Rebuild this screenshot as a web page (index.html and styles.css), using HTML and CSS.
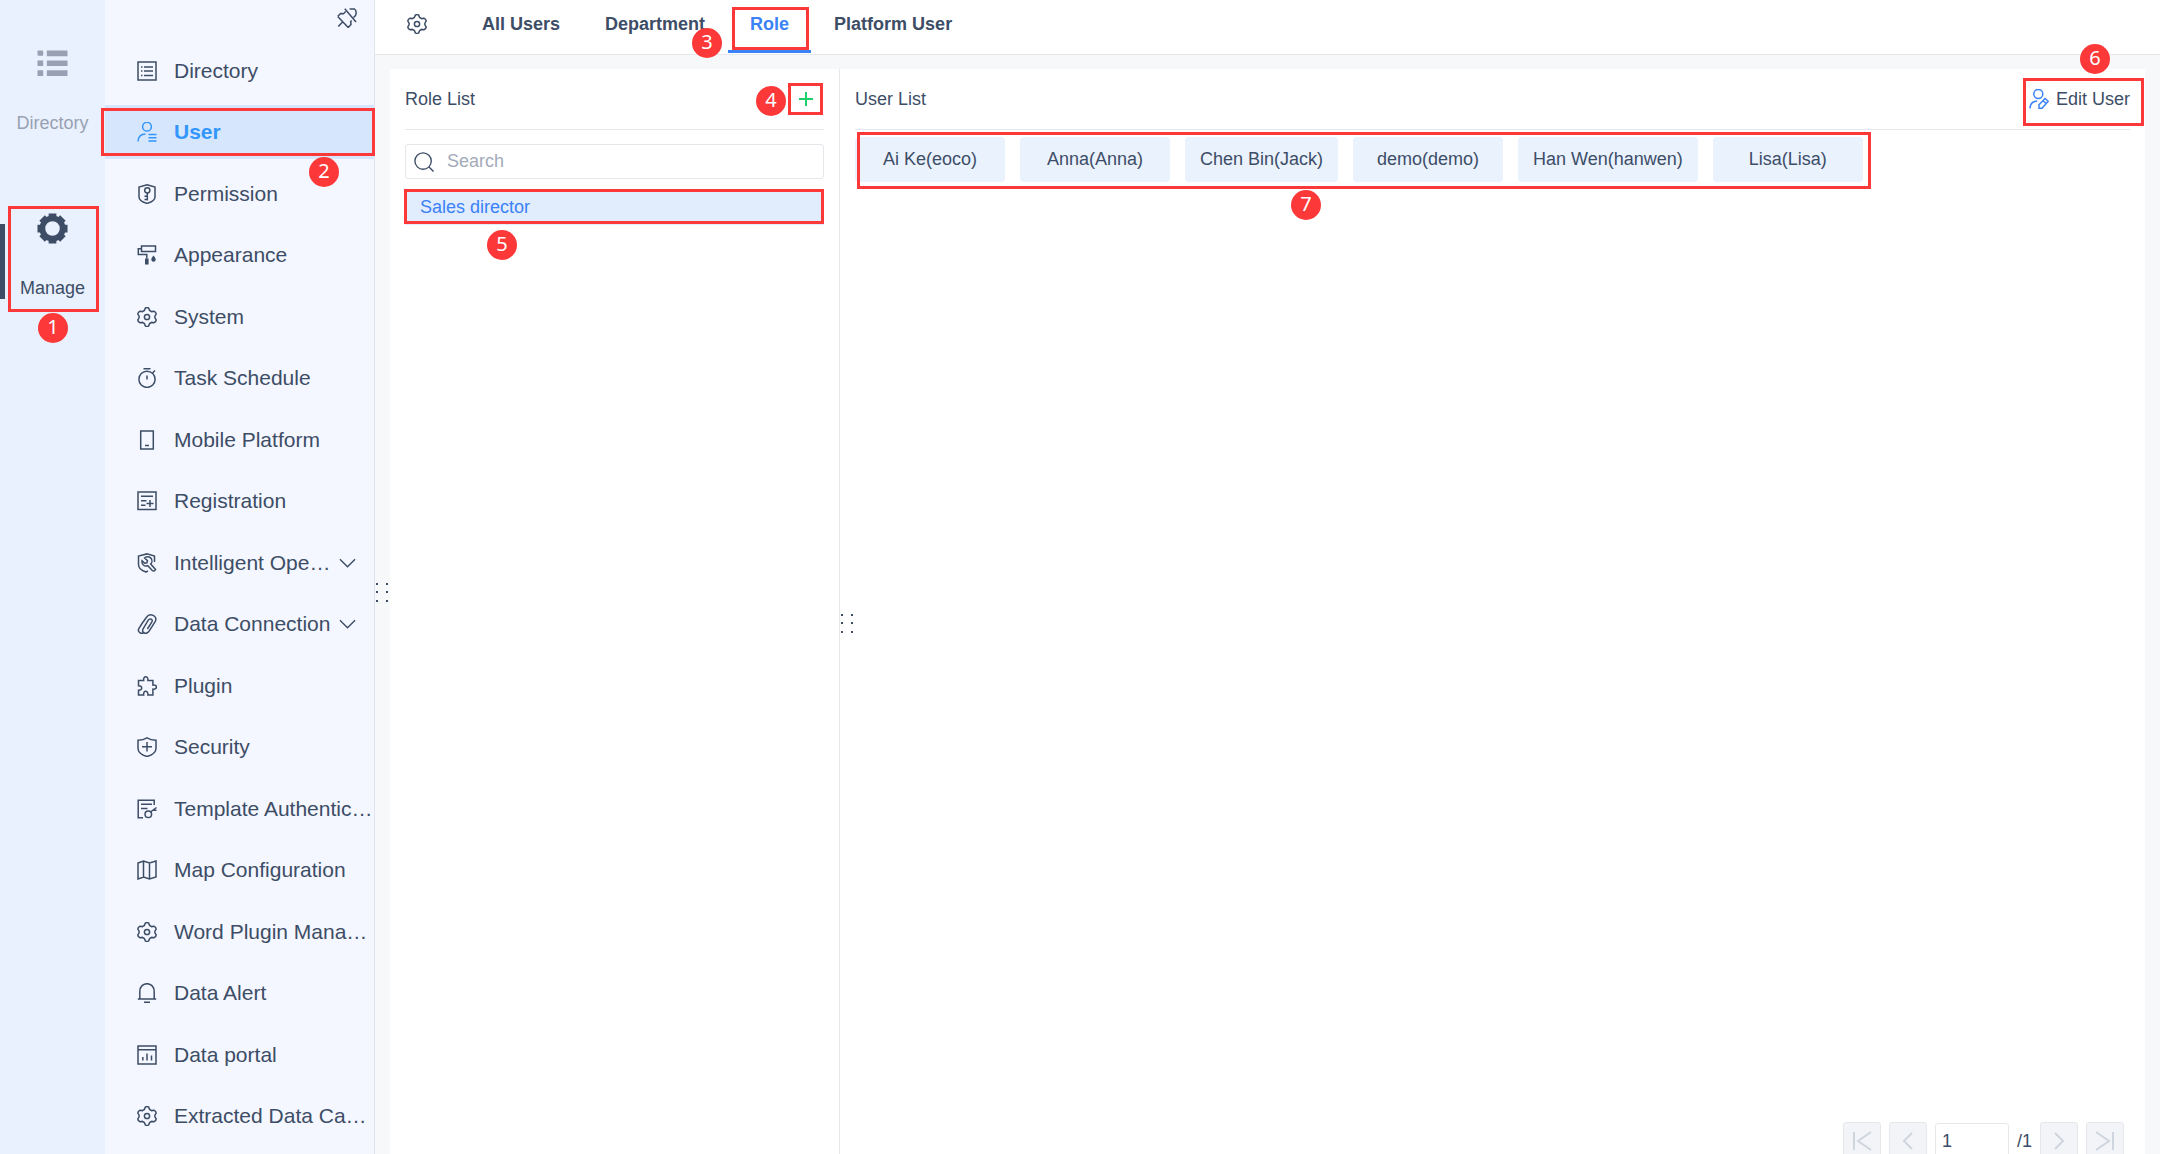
FILE: index.html
```html
<!DOCTYPE html>
<html lang="en">
<head>
  <meta charset="UTF-8">
  <meta name="viewport" content="width=device-width, initial-scale=1">
  <title>Role - User Management</title>
  <link rel="stylesheet" href="styles.css">
</head>
<body>
  <!-- Icon sprite -->
  <svg class="sprite" aria-hidden="true">
    <symbol id="i-gear" viewBox="0 0 20 20"><path d="M8.3 1.2Q10-.2 11.7 1.2L12.6 3.4 14.7 4.6 17 4.2Q19.1 5 19.2 7.1L17.9 9.2V10.8L19.2 12.9Q19.1 15 17 15.8L14.7 15.4 12.6 16.6 11.7 18.8Q10 20.2 8.3 18.8L7.4 16.6 5.3 15.4 3 15.8Q.9 15 .8 12.9L2.1 10.8V9.2L.8 7.1Q.9 5 3 4.2L5.3 4.6 7.4 3.4z"/><circle cx="10" cy="10" r="2.6"/></symbol>
    <symbol id="i-directory" viewBox="0 0 20 20"><path d="M1 1h18v18H1zM7 6h9M7 10h9M7 14.5h9M4 6h1.5M4 10h1.5M4 14.5h1.5"/></symbol>
    <symbol id="i-user" viewBox="0 0 20 20"><circle cx="10" cy="4.7" r="4.4"/><path d="M1 19.500c.3-4.500 3-7.500 7.500-7.500M11.500 12.500h8M11.500 15.800h8M11.500 19.100h8"/></symbol>
    <symbol id="i-permission" viewBox="0 0 20 20"><path d="M10 .8 18 3v10c0 3-4 5.300-8 6.400-4-1.100-8-3.400-8-6.400V3z"/><circle cx="10.3" cy="6.3" r="2.6"/><path d="M10.3 9v7.500M10.300 12.300H7.500M10.300 15.500H7.500"/></symbol>
    <symbol id="i-appearance" viewBox="0 0 20 20"><path d="M4.500 1h14v5.500h-14zM4.500 3.700H1.300V9.500h8.500v4"/><path class="fill" d="M8 13.500h3.600v6H8zM16.500 10.500c1 1.500 2.200 2.600 2.200 4a2.200 2.200 0 0 1-4.400 0c0-1.400 1.200-2.500 2.200-4z"/></symbol>
    <symbol id="i-task" viewBox="0 0 20 20"><circle cx="10" cy="11.3" r="8.1"/><path d="M6.5.8h7M10 7.500v4M15.500 5 18 2.500"/></symbol>
    <symbol id="i-mobile" viewBox="0 0 20 20"><path d="M3.700 1h12.600v18H3.700zM8 15.500h4"/></symbol>
    <symbol id="i-registration" viewBox="0 0 20 20"><path d="M1 1h18v17.500H1zM4 5.300h12M4 9.800h5.500M4 14.300h4.500M9.500 12.500h7M13 9v7"/></symbol>
    <symbol id="i-intelligent" viewBox="0 0 20 20"><path d="M17.500 9V3L10 .9 1.500 3v8.500c0 4 3.500 6.200 7.500 7.500l2-1M7.500 5l3 2.600-.6 2.200-2.200.4L5 7.600a4.300 4.300 0 0 0 5.800 5.100l4.700 5q2 1 3-1.200L13.700 11A4.300 4.300 0 0 0 7.500 5z"/></symbol>
    <symbol id="i-connection" viewBox="0 0 20 20"><path d="m5 9.500 4.500-6.200c3-4.800 11.500-1.800 8.800 4l-6 9.600c-2.800 4.500-8.500 1.800-6.200-2l5-8.500c1.800-2.800 5.200-1 3.800 1.500L10.400 15M5 9.500l-3 4.800c-2.200 3.500 2.600 6.800 5.400 3.800"/></symbol>
    <symbol id="i-plugin" viewBox="0 0 20 20"><path d="M1.500 4.500h5.200c-.8-5 4.800-5 4.200 0h5V9c4.700-.8 4.700 4.800 0 4.200V19h-5c.5-5-5-5-4.200 0H1.500v-4.700c4.300.4 4.300-5 0-4.500z"/></symbol>
    <symbol id="i-security" viewBox="0 0 20 20"><path d="M10 .8c2.500 1.500 5.500 2.300 9 2.500v8c0 4-4.500 7-9 8.200-4.500-1.200-9-4.200-9-8.200v-8C4.500 3.100 7.500 2.300 10 .8zM10 5v9.500M5 9.800h10"/></symbol>
    <symbol id="i-template" viewBox="0 0 20 20"><path d="M6 18.700H1.200V1.200h16V6M4 5.300h11M4 9.500h6.500"/><circle cx="11.3" cy="15.3" r="3.3"/><path d="M13.500 13 19.500 8.500M16 11.300h3.500"/></symbol>
    <symbol id="i-map" viewBox="0 0 20 20"><path d="m1 3 5.500-2 6 2L19 1v16l-6.500 2-6-2L1 19zM6.500 1v16M12.500 3v16"/></symbol>
    <symbol id="i-alert" viewBox="0 0 20 20"><path d="M.8 16h18.400M2.800 16V8.500c0-10.400 14.400-10.400 14.400 0V16M7 19.300h6"/></symbol>
    <symbol id="i-portal" viewBox="0 0 20 20"><path d="M1 1h18v18H1zM1 4.700h18M5.800 15.500v-3.500M10 15.500V8.500M14.500 15.500v-5"/></symbol>
    <symbol id="i-pin" viewBox="0 0 20 20"><path d="M12.600.9 17.500 1C20 3 19.500 5 18.500 7.500l-2 2M.7 8.500 3.500 5.500l3 .3 2.200-2.300M.7 8.500l10.500 11 2.800-3-.3-3 1-1M5.500 14 1.300 18.500M7.800.8 19 14"/></symbol>
    <symbol id="i-edit-user" viewBox="0 0 20 20"><circle cx="9.3" cy="5" r="4.500"/><path d="M1 19.500c.2-4.700 3-7.300 7.200-7.500M10 19.300v-3.500l6-6.300 3.200 2.800-6.200 7zM14 11.800l3 2.600"/></symbol>
    <symbol id="i-search" viewBox="0 0 22 22"><circle cx="10" cy="10" r="9"/><path d="m16.500 16.500 5 5"/></symbol>
    <symbol id="i-plus" viewBox="0 0 16 16"><path d="M8 1v14M1 8h14"/></symbol>
    <symbol id="i-chevron" viewBox="0 0 18 10"><path d="m1 1 8 8 8-8"/></symbol>
    <symbol id="i-first" viewBox="0 0 20 20"><path d="M2 1v18M19 1 6 10l13 9"/></symbol>
    <symbol id="i-prev" viewBox="0 0 20 20"><path d="M14 2 6 10l8 8"/></symbol>
    <symbol id="i-next" viewBox="0 0 20 20"><path d="m6 2 8 8-8 8"/></symbol>
    <symbol id="i-last" viewBox="0 0 20 20"><path d="M18 1v18M1 1l13 9-13 9"/></symbol>
    <symbol id="i-list" viewBox="0 0 30 26"><path class="fill" d="M1 .5h4a1 1 0 0 1 1 1v4H1.500a1 1 0 0 1-1-1V1zM9.500.5h20v5.500h-20zM.5 10H6v5.500H.5zM9.500 10h20v5.500h-20zM.5 19.500H6V25H.5zM9.500 19.500h20V25h-20z"/></symbol>
    <symbol id="i-manage" viewBox="0 0 32 32"><g stroke-width="8"><circle cx="16" cy="16" r="10.500" stroke-width="6"/><path d="M16 .5v5M16 26.500v5"/><path d="M16 .8v5M16 26.200v5" transform="rotate(45 16 16)"/><path d="M16 .5v5M16 26.500v5" transform="rotate(90 16 16)"/><path d="M16 .8v5M16 26.200v5" transform="rotate(135 16 16)"/></g></symbol>
    <symbol id="i-grip" viewBox="0 0 14 20"><path class="fill" d="M1 0h2v2H1zM11 0h2v2h-2zM1 8h2v2H1zM11 8h2v2h-2zM1 17h2v2H1zM11 17h2v2h-2z"/></symbol>
  </svg>

  <div class="app">
    <nav class="rail" aria-label="Modules">
      <a href="#" class="rail-item"><svg class="icon icon-rail"><use href="#i-list"/></svg><span>Directory</span></a>
      <a href="#" class="rail-item active"><svg class="icon icon-rail"><use href="#i-manage"/></svg><span>Manage</span></a>
    </nav>

    <aside class="sidebar">
      <button class="pin" aria-label="Unpin menu"><svg class="icon"><use href="#i-pin"/></svg></button>
      <nav class="menu" aria-label="Manage">
        <a href="#" class="menu-item"><svg class="icon"><use href="#i-directory"/></svg><span>Directory</span></a>
        <a href="#" class="menu-item active"><svg class="icon"><use href="#i-user"/></svg><span>User</span></a>
        <a href="#" class="menu-item"><svg class="icon"><use href="#i-permission"/></svg><span>Permission</span></a>
        <a href="#" class="menu-item"><svg class="icon"><use href="#i-appearance"/></svg><span>Appearance</span></a>
        <a href="#" class="menu-item"><svg class="icon"><use href="#i-gear"/></svg><span>System</span></a>
        <a href="#" class="menu-item"><svg class="icon"><use href="#i-task"/></svg><span>Task Schedule</span></a>
        <a href="#" class="menu-item"><svg class="icon"><use href="#i-mobile"/></svg><span>Mobile Platform</span></a>
        <a href="#" class="menu-item"><svg class="icon"><use href="#i-registration"/></svg><span>Registration</span></a>
        <a href="#" class="menu-item"><svg class="icon"><use href="#i-intelligent"/></svg><span>Intelligent Ope…</span><svg class="icon chevron"><use href="#i-chevron"/></svg></a>
        <a href="#" class="menu-item"><svg class="icon"><use href="#i-connection"/></svg><span>Data Connection</span><svg class="icon chevron"><use href="#i-chevron"/></svg></a>
        <a href="#" class="menu-item"><svg class="icon"><use href="#i-plugin"/></svg><span>Plugin</span></a>
        <a href="#" class="menu-item"><svg class="icon"><use href="#i-security"/></svg><span>Security</span></a>
        <a href="#" class="menu-item"><svg class="icon"><use href="#i-template"/></svg><span>Template Authentic…</span></a>
        <a href="#" class="menu-item"><svg class="icon"><use href="#i-map"/></svg><span>Map Configuration</span></a>
        <a href="#" class="menu-item"><svg class="icon"><use href="#i-gear"/></svg><span>Word Plugin Mana…</span></a>
        <a href="#" class="menu-item"><svg class="icon"><use href="#i-alert"/></svg><span>Data Alert</span></a>
        <a href="#" class="menu-item"><svg class="icon"><use href="#i-portal"/></svg><span>Data portal</span></a>
        <a href="#" class="menu-item"><svg class="icon"><use href="#i-gear"/></svg><span>Extracted Data Ca…</span></a>
      </nav>
    </aside>

    <main class="main">
      <header class="tabs">
        <button class="tab-settings" aria-label="Settings"><svg class="icon"><use href="#i-gear"/></svg></button>
        <button class="tab">All Users</button>
        <button class="tab">Department</button>
        <button class="tab active">Role</button>
        <button class="tab">Platform User</button>
      </header>

      <div class="content">
        <div class="gutter gutter-menu"><svg class="icon grip"><use href="#i-grip"/></svg></div>

        <section class="roles">
          <div class="panel-head">
            <h2>Role List</h2>
            <button class="add" aria-label="Add role"><svg class="icon"><use href="#i-plus"/></svg></button>
          </div>
          <label class="search">
            <svg class="icon"><use href="#i-search"/></svg>
            <input type="text" placeholder="Search" aria-label="Search">
          </label>
          <button class="role">Sales director</button>
        </section>

        <section class="users">
          <div class="gutter gutter-users"><svg class="icon grip"><use href="#i-grip"/></svg></div>
          <div class="users-body">
            <div class="panel-head">
              <h2>User List</h2>
              <button class="edit"><svg class="icon"><use href="#i-edit-user"/></svg>Edit User</button>
            </div>
            <ul class="chips">
              <li>Ai Ke(eoco)</li>
              <li>Anna(Anna)</li>
              <li>Chen Bin(Jack)</li>
              <li>demo(demo)</li>
              <li>Han Wen(hanwen)</li>
              <li>Lisa(Lisa)</li>
            </ul>
            <div class="pager">
              <button aria-label="First page"><svg class="icon"><use href="#i-first"/></svg></button>
              <button aria-label="Previous page"><svg class="icon"><use href="#i-prev"/></svg></button>
              <input type="text" value="1" aria-label="Page">
              <span>/1</span>
              <button aria-label="Next page"><svg class="icon"><use href="#i-next"/></svg></button>
              <button aria-label="Last page"><svg class="icon"><use href="#i-last"/></svg></button>
            </div>
          </div>
        </section>
      </div>
    </main>

    <!-- Numbered callouts over the interface -->
    <div class="mark mark-manage"></div>
    <div class="mark mark-user"></div>
    <div class="mark mark-role"></div>
    <div class="mark mark-add"></div>
    <div class="mark mark-director"></div>
    <div class="mark mark-edit"></div>
    <div class="mark mark-chips"></div>
    <span class="badge badge-1">1</span>
    <span class="badge badge-2">2</span>
    <span class="badge badge-3">3</span>
    <span class="badge badge-4">4</span>
    <span class="badge badge-5">5</span>
    <span class="badge badge-6">6</span>
    <span class="badge badge-7">7</span>
  </div>
</body>
</html>
```
FILE: styles.css
```css
:root {
  --text: #3d4d66;
  --muted: #98a1b3;
  --blue: #3b82f6;
  --line: #e5e7eb;
  --chip: #eaf2fe;
  --red: #fc3838;
}

* {
  box-sizing: border-box;
}

body {
  margin: 0;
  overflow: hidden;
  font-family: "Liberation Sans", Arial, sans-serif;
  font-size: 18px;
  line-height: 24px;
  color: var(--text);
}

button, input {
  font: inherit;
  color: inherit;
  background: none;
  border: none;
  padding: 0;
}

button {
  cursor: pointer;
}

a {
  color: inherit;
  text-decoration: none;
}

h2 {
  margin: 0;
  font-size: 18px;
  font-weight: normal;
}

.sprite {
  display: none;
}

.icon {
  display: block;
  flex: none;
  width: 20px;
  height: 20px;
  fill: none;
  stroke: currentColor;
  stroke-width: 1.5;
  overflow: visible;
}

.fill {
  fill: currentColor;
  stroke: none;
}

.app {
  position: relative;
  display: flex;
  height: 100vh;
}

/* Left rail */
.rail {
  flex: none;
  width: 105px;
  padding-top: 48px;
  display: flex;
  flex-direction: column;
  gap: 78px;
  background: #eaf1fe;
}

.rail-item {
  position: relative;
  display: flex;
  flex-direction: column;
  align-items: center;
  gap: 32px;
  color: var(--muted);
}

.rail-item.active {
  color: var(--text);
}

.rail-item.active::before {
  content: "";
  position: absolute;
  left: 0;
  top: 11px;
  bottom: 1px;
  width: 5px;
  background: var(--text);
}

.icon-rail {
  width: 31px;
  height: 31px;
}

/* Menu */
.sidebar {
  flex: none;
  width: 270px;
  display: flex;
  flex-direction: column;
  background: #f4f7ff;
  border-right: 1px solid #dfe4f0;
}

.pin {
  align-self: flex-end;
  margin: 8px 17px 16px;
}

.menu {
  flex: 1;
  padding-bottom: 11px;
  display: flex;
  flex-direction: column;
  justify-content: space-between;
}

.menu-item {
  height: 54px;
  padding-left: 32px;
  display: flex;
  align-items: center;
  font-size: 21px;
  white-space: nowrap;
}

.menu-item span {
  margin-left: 17px;
}

.menu-item.active {
  background: #d6e7fd;
  color: #3296fa;
  font-weight: bold;
}

.chevron {
  width: 17px;
  height: 10px;
  margin: 0 18px 0 auto;
}

/* Tabs */
.main {
  flex: 1;
  min-width: 0;
  display: flex;
  flex-direction: column;
  background: #f6f8fa;
}

.tabs {
  display: flex;
  gap: 1px;
  padding: 0 32px 1px;
  background: #fff;
  border-bottom: 1px solid var(--line);
}

.tab {
  padding: 0 22px 2px;
  line-height: 48px;
  font-weight: bold;
  border-bottom: 3px solid transparent;
}

.tab-settings {
  margin-right: 32px;
  padding-bottom: 5px;
}

.tab.active {
  color: var(--blue);
  border-bottom-color: var(--blue);
}

/* Panels */
.content {
  flex: 1;
  display: flex;
  padding: 14px 15px 0 0;
}

.gutter {
  flex: none;
  width: 15px;
  display: flex;
  align-items: center;
}

.gutter-menu {
  padding-bottom: 38px;
}

.gutter-users {
  padding-top: 25px;
}

.grip {
  width: 14px;
}

.roles {
  flex: none;
  width: 450px;
  padding: 0 15px;
  display: flex;
  flex-direction: column;
  background: #fff;
  border-right: 1px solid var(--line);
}

.panel-head {
  height: 61px;
  display: flex;
  align-items: center;
  justify-content: space-between;
  border-bottom: 1px solid var(--line);
}

.add {
  margin-right: 10px;
  color: #1dcf6b;
}

.add .icon {
  width: 16px;
  height: 16px;
  stroke-width: 2;
}

.search {
  height: 35px;
  margin: 14px 0 10px;
  padding: 0 8px;
  display: flex;
  align-items: center;
  gap: 13px;
  border: 1px solid var(--line);
  border-radius: 3px;
}

.search input {
  flex: 1;
  padding-bottom: 2px;
  outline: none;
}

.search input::placeholder {
  color: #a3abba;
}

.role {
  height: 36px;
  padding: 0 15px;
  text-align: left;
  color: var(--blue);
  background: #e1ecfd;
}

.users {
  flex: 1;
  min-width: 0;
  display: flex;
  background: #fff;
}

.users-body {
  flex: 1;
  min-width: 0;
  margin-right: 15px;
  display: flex;
  flex-direction: column;
}

.edit {
  display: flex;
  align-items: center;
  gap: 7px;
}

.edit .icon {
  color: var(--blue);
}

.chips {
  flex: 1;
  margin: 0;
  padding: 7px 0 0;
  list-style: none;
  display: flex;
  flex-wrap: wrap;
  align-content: flex-start;
  gap: 15px;
}

.chips li {
  min-width: 150px;
  padding: 0 15px;
  line-height: 45px;
  text-align: center;
  background: var(--chip);
  border-radius: 4px;
}

/* The pager runs past the lower edge of the window */
.pager {
  display: flex;
  justify-content: flex-end;
  align-items: center;
  gap: 8px;
  margin: 0 6px -6px 0;
}

.pager button {
  width: 38px;
  height: 38px;
  display: flex;
  align-items: center;
  justify-content: center;
  color: #cfd5de;
  background: #f2f4f8;
  border: 1px solid var(--line);
  border-radius: 3px;
}

.pager .icon {
  stroke-width: 2;
}

.pager input {
  width: 74px;
  height: 36px;
  padding: 0 6px;
  border: 1px solid var(--line);
  border-radius: 3px;
}

/* Callouts */
.mark {
  position: absolute;
  border: 3px solid var(--red);
  pointer-events: none;
}

.mark-manage { left: 8px; top: 206px; width: 91px; height: 106px; }
.mark-user { left: 101px; top: 108px; width: 274px; height: 48px; }
.mark-role { left: 732px; top: 7px; width: 77px; height: 43px; }
.mark-add { left: 788px; top: 83px; width: 35px; height: 32px; }
.mark-director { left: 404px; top: 189px; width: 420px; height: 35px; }
.mark-edit { right: 16px; top: 78px; width: 121px; height: 48px; }
.mark-chips { left: 857px; top: 132px; width: 1014px; height: 57px; }

.badge {
  position: absolute;
  width: 30px;
  height: 30px;
  border-radius: 50%;
  background: var(--red);
  color: #fff;
  font-family: "Noto Sans", sans-serif;
  font-size: 20px;
  line-height: 28px;
  text-align: center;
}

.badge-1 { left: 38px; top: 313px; }
.badge-2 { left: 309px; top: 157px; }
.badge-3 { left: 692px; top: 28px; }
.badge-4 { left: 756px; top: 86px; }
.badge-5 { left: 487px; top: 230px; }
.badge-6 { right: 50px; top: 44px; }
.badge-7 { left: 1291px; top: 190px; }
```
